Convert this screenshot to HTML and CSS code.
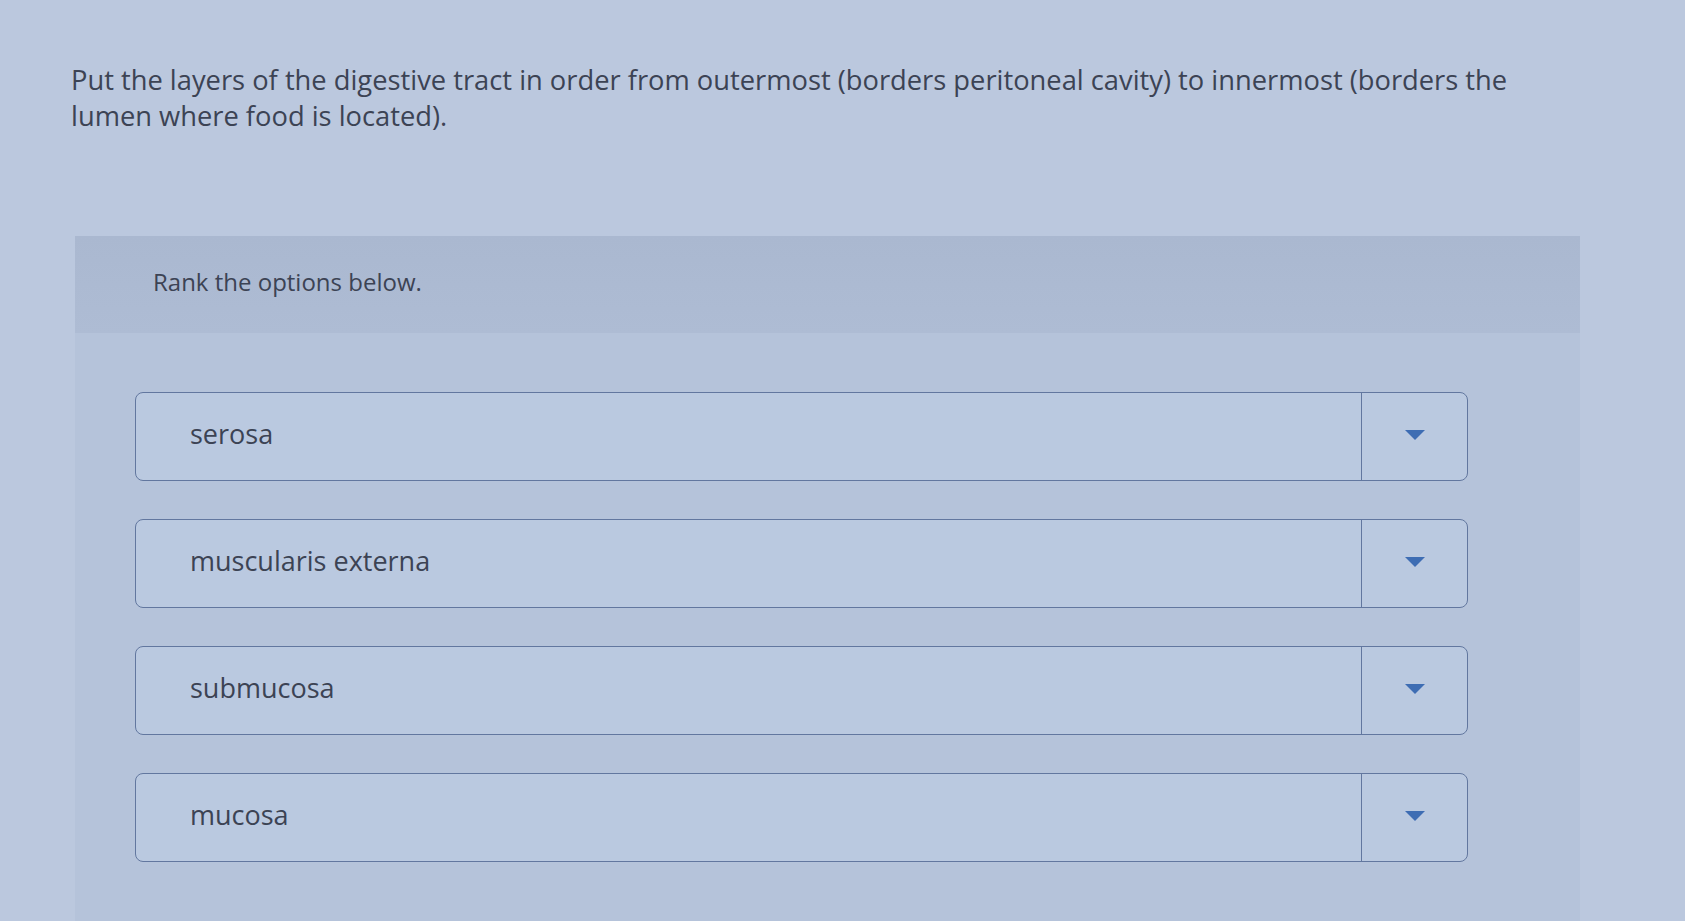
FILE: index.html
```html
<!DOCTYPE html>
<html lang="en">
<head>
<meta charset="utf-8">
<title>Ranking question</title>
<link rel="stylesheet" href="styles.css">
</head>
<body>
<main class="page">
  <p class="prompt">Put the layers of the digestive tract in order from outermost (borders peritoneal cavity) to innermost (borders the lumen where food is located).</p>

  <section class="panel">
    <header class="panel-head">Rank the options below.</header>
    <ol class="rank-list">
      <li class="rank-item">
        <span class="rank-label">serosa</span>
        <button class="rank-toggle" type="button" aria-label="Choose position"><span class="caret"></span></button>
      </li>
      <li class="rank-item">
        <span class="rank-label">muscularis externa</span>
        <button class="rank-toggle" type="button" aria-label="Choose position"><span class="caret"></span></button>
      </li>
      <li class="rank-item">
        <span class="rank-label">submucosa</span>
        <button class="rank-toggle" type="button" aria-label="Choose position"><span class="caret"></span></button>
      </li>
      <li class="rank-item">
        <span class="rank-label">mucosa</span>
        <button class="rank-toggle" type="button" aria-label="Choose position"><span class="caret"></span></button>
      </li>
    </ol>
  </section>
</main>
</body>
</html>
```

FILE: styles.css
```css
* {
  box-sizing: border-box;
}

html,
body {
  margin: 0;
  height: 100%;
}

body {
  background: #bbc8de;
  color: #3c4354;
  font-family: "Open Sans", Lato, "Liberation Sans", sans-serif;
  overflow: hidden;
}

.page {
  display: flex;
  flex-direction: column;
  height: 100%;
  padding: 62px 0 0 71px;
}

.prompt {
  margin: 0;
  width: 1480px;
  font-size: 27.3px;
  line-height: 36px;
}

.panel {
  flex: 1;
  display: flex;
  flex-direction: column;
  width: 1505px;
  margin: 102px 0 0 4px;
  background: #b5c3da;
}

.panel-head {
  height: 97px;
  padding: 31px 0 0 78px;
  background: linear-gradient(#aab8d0, #aebcd4);
  font-size: 24px;
  line-height: 30px;
}

.rank-list {
  list-style: none;
  margin: 0;
  padding: 59px 0 0 60px;
  display: flex;
  flex-direction: column;
  gap: 38px;
}

.rank-item {
  display: flex;
  width: 1333px;
  height: 89px;
  border: 1.5px solid #62779f;
  border-radius: 8px;
  background: #bac9e0;
}

.rank-label {
  flex: 1;
  display: flex;
  align-items: center;
  padding: 0 0 6px 54px;
  font-size: 27px;
}

.rank-toggle {
  width: 106px;
  display: flex;
  align-items: center;
  justify-content: center;
  padding: 0 0 4px;
  border: 0;
  border-left: 1.5px solid #62779f;
  background: transparent;
  cursor: pointer;
}

.caret {
  width: 0;
  height: 0;
  border-left: 10px solid transparent;
  border-right: 10px solid transparent;
  border-top: 10px solid #3e6db3;
}
```
